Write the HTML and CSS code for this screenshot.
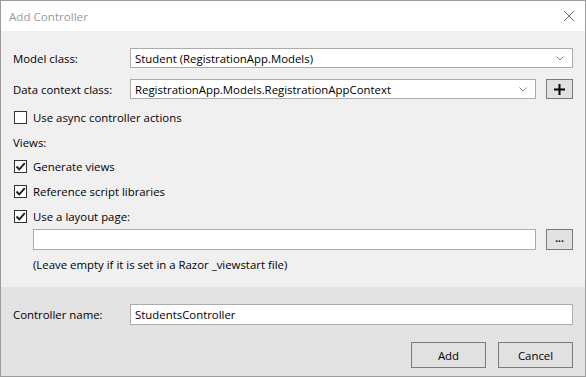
FILE: index.html
```html
<!DOCTYPE html>
<html lang="en">
<head>
  <meta charset="UTF-8" />
  <title>Add Controller</title>
  <link rel="stylesheet" href="styles.css">
</head>
<body>
  <div class="dialog">
    <div class="titlebar">
      <span class="title">Add Controller</span>
      <svg class="close" width="12" height="12" viewBox="0 0 12 12">
        <path d="M1 1 L11 11 M11 1 L1 11" stroke="#6d6d6d" stroke-width="1" fill="none" />
      </svg>
    </div>

    <div class="content">
      <div class="row first">
        <label class="label">Model class:</label>
        <div class="select">
          <span>Student (RegistrationApp.Models)</span>
          <svg class="chev" width="8" height="5" viewBox="0 0 8 5"><path d="M0.5 0.5 L4 4 L7.5 0.5" stroke="#8a8a8a" fill="none" /></svg>
        </div>
      </div>

      <div class="row second">
        <label class="label">Data context class:</label>
        <div class="select short">
          <span>RegistrationApp.Models.RegistrationAppContext</span>
          <svg class="chev" width="8" height="5" viewBox="0 0 8 5"><path d="M0.5 0.5 L4 4 L7.5 0.5" stroke="#8a8a8a" fill="none" /></svg>
        </div>
        <button class="btn-small">
          <svg width="11" height="11" viewBox="0 0 11 11"><path d="M5.5 0 V11 M0 5.5 H11" stroke="#000" stroke-width="2" /></svg>
        </button>
      </div>

      <div class="check async">
        <span class="box"></span>
        <span>Use async controller actions</span>
      </div>

      <div class="views">Views:</div>

      <div class="check first-view">
        <span class="box"><svg width="11" height="11" viewBox="0 0 11 11"><path d="M1.5 5.5 L4.3 8.3 L9.8 2.2" stroke="#1e1e1e" stroke-width="1.9" fill="none" /></svg></span>
        <span>Generate views</span>
      </div>
      <div class="check next-view">
        <span class="box"><svg width="11" height="11" viewBox="0 0 11 11"><path d="M1.5 5.5 L4.3 8.3 L9.8 2.2" stroke="#1e1e1e" stroke-width="1.9" fill="none" /></svg></span>
        <span>Reference script libraries</span>
      </div>
      <div class="check next-view">
        <span class="box"><svg width="11" height="11" viewBox="0 0 11 11"><path d="M1.5 5.5 L4.3 8.3 L9.8 2.2" stroke="#1e1e1e" stroke-width="1.9" fill="none" /></svg></span>
        <span>Use a layout page:</span>
      </div>

      <div class="row layout">
        <input class="text-input layout-input" type="text" value="" />
        <button class="btn-small dots">...</button>
      </div>
      <div class="hint">(Leave empty if it is set in a Razor _viewstart file)</div>
    </div>

    <div class="footer">
      <div class="row">
        <label class="label">Controller name:</label>
        <input class="text-input name-input" type="text" value="StudentsController" />
      </div>
      <div class="actions">
        <button class="btn">Add</button>
        <button class="btn">Cancel</button>
      </div>
    </div>
  </div>
</body>
</html>
```

FILE: styles.css
```css
/* Windows dialog look */
* {
  margin: 0;
  padding: 0;
  box-sizing: border-box;
}
body {
  background: #5a6a80;
  font-family: 'Open Sans', 'Noto Sans', sans-serif;
  font-size: 11.4px;
  color: #000;
}
.dialog {
  width: 586px;
  height: 377px;
  border: 1px solid #9c9c9c;
  background: #f0f0f0;
  display: flex;
  flex-direction: column;
}
.titlebar {
  height: 30px;
  background: #fff;
  display: flex;
  align-items: center;
  justify-content: space-between;
  padding: 0 10px 0 8px;
}
.title {
  color: #9a9a9a;
  font-size: 11.6px;
}
.content {
  flex: 1;
  padding: 17px 12px 0 12px;
  display: flex;
  flex-direction: column;
}
.row {
  display: flex;
  align-items: center;
}
.row.second {
  margin-top: 11px;
}
.label {
  width: 117px;
  flex-shrink: 0;
}
.select {
  flex: 1;
  height: 20px;
  background: #fff;
  border: 1px solid #acacac;
  display: flex;
  align-items: center;
  justify-content: space-between;
  padding: 0 8px 0 4px;
}
.select.short {
  flex: none;
  width: 406px;
}
.btn-small {
  width: 27px;
  height: 20px;
  margin-left: 10px;
  background: #e1e1e1;
  border: 1px solid #7a7a7a;
  display: flex;
  align-items: center;
  justify-content: center;
  font-family: inherit;
  font-size: 10px;
  font-weight: bold;
}
.check {
  display: flex;
  align-items: center;
  gap: 6px;
  height: 13px;
  padding-left: 1px;
}
.check.async {
  margin-top: 12px;
}
.check.first-view {
  margin-top: 9px;
}
.check.next-view {
  margin-top: 12px;
}
.box {
  width: 13px;
  height: 13px;
  border: 1px solid #333;
  background: #fff;
  display: flex;
  align-items: center;
  justify-content: center;
}
.views {
  margin-top: 11px;
  line-height: 16px;
}
.row.layout {
  margin-top: 6px;
  padding-left: 20px;
}
.text-input {
  height: 21px;
  background: #fff;
  border: 1px solid #acacac;
  font-family: inherit;
  font-size: inherit;
  padding: 0 4px;
  outline: none;
}
.layout-input {
  width: 504px;
}
.btn-small.dots {
  height: 21px;
  padding-bottom: 4px;
}
.hint {
  margin-top: 7px;
  padding-left: 20px;
}
.footer {
  height: 89px;
  background: #e3e3e3;
  padding: 17px 12px 0 12px;
}
.name-input {
  flex: 1;
}
.actions {
  display: flex;
  justify-content: flex-end;
  gap: 12px;
  margin-top: 17px;
}
.btn {
  width: 75px;
  height: 26px;
  background: #e1e1e1;
  border: 1px solid #7a7a7a;
  font-family: inherit;
  font-size: inherit;
}
```
